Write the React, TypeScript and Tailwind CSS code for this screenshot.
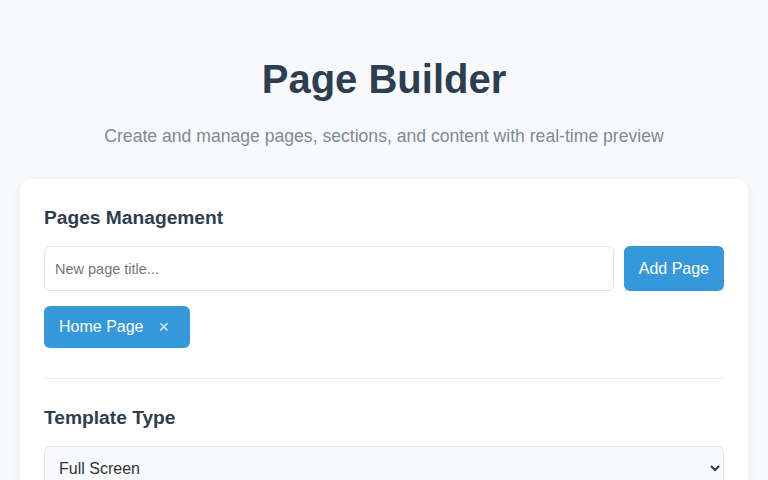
import React from "react";

export default function App() {
  const [title, setTitle] = React.useState("");
  const [pages, setPages] = React.useState<string[]>(["Home Page"]);
  const [template, setTemplate] = React.useState("full");

  const addPage = () => {
    if (!title.trim()) return;
    setPages([...pages, title.trim()]);
    setTitle("");
  };

  return (
    <div
      className="min-h-screen bg-[#f8f9fc] px-5 pt-[55px] pb-10"
      style={{ fontFamily: '"Liberation Sans", Arial, sans-serif' }}
    >
      {/* Header */}
      <header className="text-center">
        <h1 className="text-[40px] leading-[48px] font-bold text-[#2c3e50]">Page Builder</h1>
        <p className="mt-[19px] text-[17.6px] leading-[28px] text-[#7f8c8d]">
          Create and manage pages, sections, and content with real-time preview
        </p>
      </header>

      {/* Main card */}
      <div className="mt-[29px] bg-white rounded-xl shadow-[0_2px_10px_rgba(0,0,0,0.06)] p-6">
        <section className="pb-[30px] border-b border-[#ecf0f1]">
          <h2 className="pt-[1px] text-[19.2px] leading-[28px] font-bold text-[#2c3e50]">Pages Management</h2>
          <div className="mt-[14px] flex gap-[10px]">
            <input
              value={title}
              onChange={(e) => setTitle(e.target.value)}
              placeholder="New page title..."
              className="flex-1 h-[45px] px-[10px] border border-[#e2e6ea] rounded-md text-[14.5px] text-[#2c3e50] placeholder:text-[#757575] outline-none"
            />
            <button
              onClick={addPage}
              className="h-[45px] px-[15px] bg-[#3498db] text-white text-[16px] rounded-md"
            >
              Add Page
            </button>
          </div>
          <div className="mt-[15px] flex flex-wrap gap-[10px]">
            {pages.map((p, i) => (
              <div
                key={p + i}
                className="h-[42px] flex items-center pl-[15px] pr-[16px] bg-[#3498db] text-white text-[16px] rounded-md"
              >
                <span>{p}</span>
                <button
                  onClick={() => setPages(pages.filter((_, j) => j !== i))}
                  className="ml-[10px] px-[5px] text-[18px] leading-none text-white/85"
                >
                  ×
                </button>
              </div>
            ))}
          </div>
        </section>

        <section className="pt-6">
          <h2 className="pt-[1px] text-[19.2px] leading-[28px] font-bold text-[#2c3e50]">Template Type</h2>
          <select
            value={template}
            onChange={(e) => setTemplate(e.target.value)}
            className="mt-[14px] w-full h-[45px] px-[10px] border border-[#e2e6ea] rounded-md bg-[#f8f9fc] text-[16px] text-[#333]"
          >
            <option value="full">Full Screen</option>
            <option value="boxed">Boxed</option>
            <option value="sidebar">With Sidebar</option>
          </select>
        </section>
      </div>
    </div>
  );
}
